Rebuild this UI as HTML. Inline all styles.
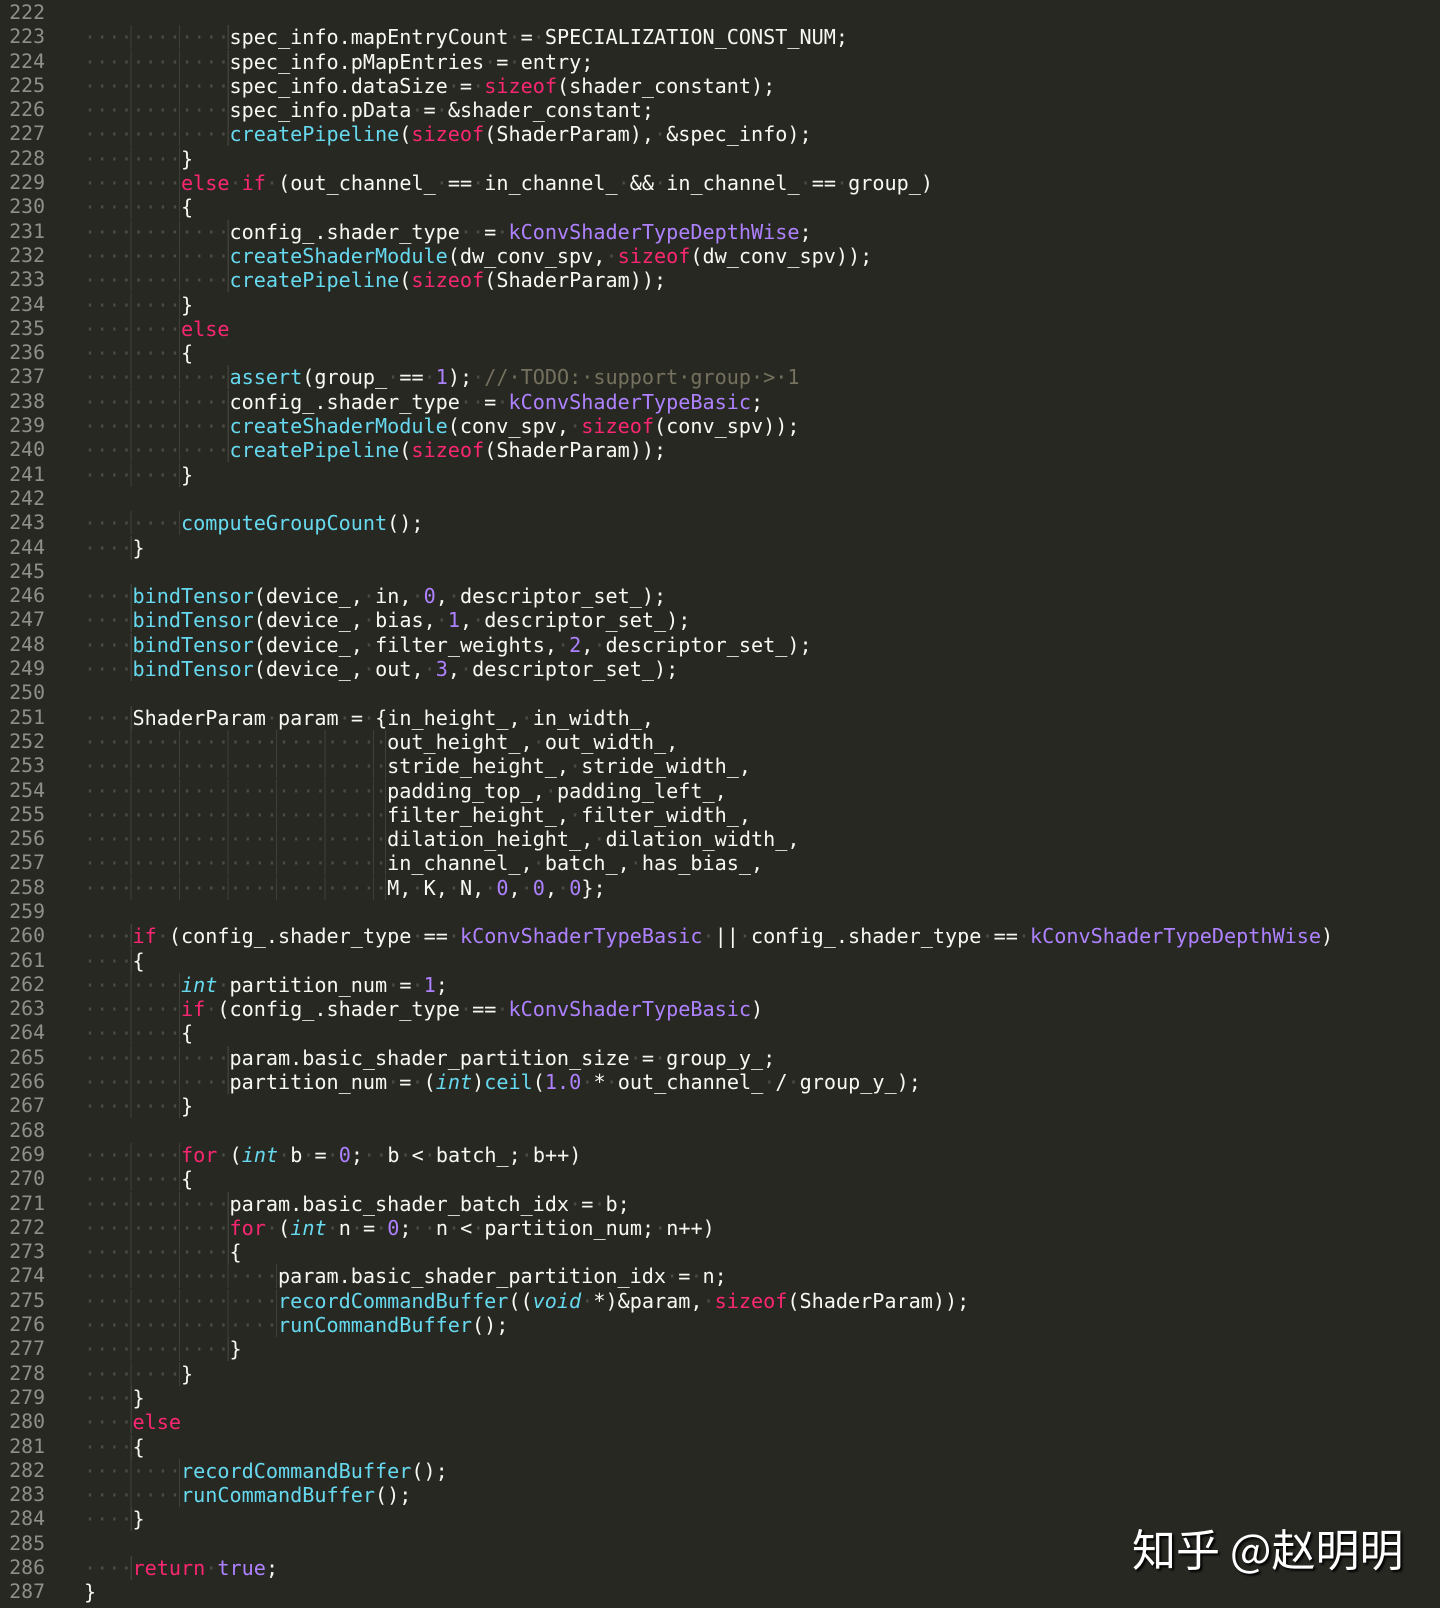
<!DOCTYPE html>
<html><head><meta charset="utf-8"><style>
html,body{margin:0;padding:0;background:#272822;}
body{width:1440px;height:1608px;overflow:hidden;position:relative;font-family:"DejaVu Sans Mono","Liberation Mono",monospace;font-size:20.15px;}
.g{position:absolute;left:0;top:1px;width:45px;text-align:right;color:#8f908a;line-height:24.3px;white-space:pre;font-size:19.8px;}
.c{position:absolute;left:84px;top:1px;color:#f8f8f2;line-height:24.3px;white-space:pre;}
w{color:#4a4b44;}
w.L{background-image:repeating-linear-gradient(to right,#3e3f38 0 1px,transparent 1px 48.5px);background-position:-2px 0;}
k{color:#f92672;} f{color:#66d9ef;} n{color:#ae81ff;} t{color:#66d9ef;font-style:italic;} c{color:#75715e;}
.wm{position:absolute;left:1132px;top:1515px;font-family:"Noto Sans CJK SC","WenQuanYi Zen Hei",sans-serif;font-size:44px;color:#fff;text-shadow:2px 2px 2px #000;white-space:nowrap;}
</style></head><body>
<div class="g">222
223
224
225
226
227
228
229
230
231
232
233
234
235
236
237
238
239
240
241
242
243
244
245
246
247
248
249
250
251
252
253
254
255
256
257
258
259
260
261
262
263
264
265
266
267
268
269
270
271
272
273
274
275
276
277
278
279
280
281
282
283
284
285
286
287</div>
<div class="c">
<w class="L">············</w>spec_info.mapEntryCount<w>·</w>=<w>·</w>SPECIALIZATION_CONST_NUM;
<w class="L">············</w>spec_info.pMapEntries<w>·</w>=<w>·</w>entry;
<w class="L">············</w>spec_info.dataSize<w>·</w>=<w>·</w><k>sizeof</k>(shader_constant);
<w class="L">············</w>spec_info.pData<w>·</w>=<w>·</w>&amp;shader_constant;
<w class="L">············</w><f>createPipeline</f>(<k>sizeof</k>(ShaderParam),<w>·</w>&amp;spec_info);
<w class="L">········</w>}
<w class="L">········</w><k>else</k><w>·</w><k>if</k><w>·</w>(out_channel_<w>·</w>==<w>·</w>in_channel_<w>·</w>&amp;&amp;<w>·</w>in_channel_<w>·</w>==<w>·</w>group_)
<w class="L">········</w>{
<w class="L">············</w>config_.shader_type<w>··</w>=<w>·</w><n>kConvShaderTypeDepthWise</n>;
<w class="L">············</w><f>createShaderModule</f>(dw_conv_spv,<w>·</w><k>sizeof</k>(dw_conv_spv));
<w class="L">············</w><f>createPipeline</f>(<k>sizeof</k>(ShaderParam));
<w class="L">········</w>}
<w class="L">········</w><k>else</k>
<w class="L">········</w>{
<w class="L">············</w><f>assert</f>(group_<w>·</w>==<w>·</w><n>1</n>);<w>·</w><c>//·TODO:·support·group·&gt;·1</c>
<w class="L">············</w>config_.shader_type<w>··</w>=<w>·</w><n>kConvShaderTypeBasic</n>;
<w class="L">············</w><f>createShaderModule</f>(conv_spv,<w>·</w><k>sizeof</k>(conv_spv));
<w class="L">············</w><f>createPipeline</f>(<k>sizeof</k>(ShaderParam));
<w class="L">········</w>}

<w class="L">········</w><f>computeGroupCount</f>();
<w class="L">····</w>}

<w class="L">····</w><f>bindTensor</f>(device_,<w>·</w>in,<w>·</w><n>0</n>,<w>·</w>descriptor_set_);
<w class="L">····</w><f>bindTensor</f>(device_,<w>·</w>bias,<w>·</w><n>1</n>,<w>·</w>descriptor_set_);
<w class="L">····</w><f>bindTensor</f>(device_,<w>·</w>filter_weights,<w>·</w><n>2</n>,<w>·</w>descriptor_set_);
<w class="L">····</w><f>bindTensor</f>(device_,<w>·</w>out,<w>·</w><n>3</n>,<w>·</w>descriptor_set_);

<w class="L">····</w>ShaderParam<w>·</w>param<w>·</w>=<w>·</w>{in_height_,<w>·</w>in_width_,
<w class="L">·························</w>out_height_,<w>·</w>out_width_,
<w class="L">·························</w>stride_height_,<w>·</w>stride_width_,
<w class="L">·························</w>padding_top_,<w>·</w>padding_left_,
<w class="L">·························</w>filter_height_,<w>·</w>filter_width_,
<w class="L">·························</w>dilation_height_,<w>·</w>dilation_width_,
<w class="L">·························</w>in_channel_,<w>·</w>batch_,<w>·</w>has_bias_,
<w class="L">·························</w>M,<w>·</w>K,<w>·</w>N,<w>·</w><n>0</n>,<w>·</w><n>0</n>,<w>·</w><n>0</n>};

<w class="L">····</w><k>if</k><w>·</w>(config_.shader_type<w>·</w>==<w>·</w><n>kConvShaderTypeBasic</n><w>·</w>||<w>·</w>config_.shader_type<w>·</w>==<w>·</w><n>kConvShaderTypeDepthWise</n>)
<w class="L">····</w>{
<w class="L">········</w><t>int</t><w>·</w>partition_num<w>·</w>=<w>·</w><n>1</n>;
<w class="L">········</w><k>if</k><w>·</w>(config_.shader_type<w>·</w>==<w>·</w><n>kConvShaderTypeBasic</n>)
<w class="L">········</w>{
<w class="L">············</w>param.basic_shader_partition_size<w>·</w>=<w>·</w>group_y_;
<w class="L">············</w>partition_num<w>·</w>=<w>·</w>(<t>int</t>)<f>ceil</f>(<n>1.0</n><w>·</w>*<w>·</w>out_channel_<w>·</w>/<w>·</w>group_y_);
<w class="L">········</w>}

<w class="L">········</w><k>for</k><w>·</w>(<t>int</t><w>·</w>b<w>·</w>=<w>·</w><n>0</n>;<w>··</w>b<w>·</w>&lt;<w>·</w>batch_;<w>·</w>b++)
<w class="L">········</w>{
<w class="L">············</w>param.basic_shader_batch_idx<w>·</w>=<w>·</w>b;
<w class="L">············</w><k>for</k><w>·</w>(<t>int</t><w>·</w>n<w>·</w>=<w>·</w><n>0</n>;<w>··</w>n<w>·</w>&lt;<w>·</w>partition_num;<w>·</w>n++)
<w class="L">············</w>{
<w class="L">················</w>param.basic_shader_partition_idx<w>·</w>=<w>·</w>n;
<w class="L">················</w><f>recordCommandBuffer</f>((<t>void</t><w>·</w>*)&amp;param,<w>·</w><k>sizeof</k>(ShaderParam));
<w class="L">················</w><f>runCommandBuffer</f>();
<w class="L">············</w>}
<w class="L">········</w>}
<w class="L">····</w>}
<w class="L">····</w><k>else</k>
<w class="L">····</w>{
<w class="L">········</w><f>recordCommandBuffer</f>();
<w class="L">········</w><f>runCommandBuffer</f>();
<w class="L">····</w>}

<w class="L">····</w><k>return</k><w>·</w><n>true</n>;
}</div>
<div class="wm">知乎 @赵明明</div>
</body></html>
